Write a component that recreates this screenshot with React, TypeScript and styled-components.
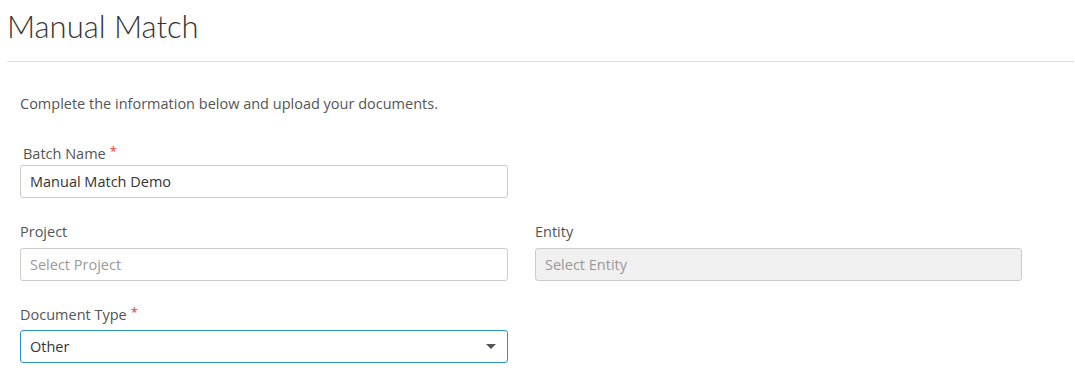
import React from 'react';
import styled, { createGlobalStyle } from 'styled-components';

const GlobalStyle = createGlobalStyle`
  body {
    margin: 0;
    background: #fff;
    font-family: 'Open Sans', 'Lato', sans-serif;
    color: #555;
  }
`;

const Page = styled.div`
  padding: 8px 1px 0 7px;
`;

const Title = styled.h1`
  margin: 0;
  font-family: 'Lato', sans-serif;
  font-size: 31px;
  font-weight: 300;
  line-height: 36px;
  color: #333;
`;

const Rule = styled.hr`
  margin: 17px 0 0;
  border: 0;
  border-top: 1px solid #ddd;
`;

const Form = styled.div`
  padding: 32px 0 0 13px;
`;

const Intro = styled.p`
  margin: 0 0 30px;
  font-size: 14.5px;
  line-height: 20px;
  color: #555;
`;

const Row = styled.div`
  display: grid;
  grid-template-columns: 488px 487px;
  column-gap: 27px;
  margin-bottom: 24px;
`;

const Field = styled.div`
  display: flex;
  flex-direction: column;
`;

const Label = styled.label<{ $indent?: boolean; $gap?: number }>`
  font-size: 14.5px;
  line-height: 20px;
  color: #555;
  padding-left: ${(p) => (p.$indent ? '3px' : '0')};
  margin-bottom: ${(p) => p.$gap ?? 6}px;
`;

const Required = styled.span`
  color: #e0393e;
  margin-left: 4px;
  font-size: 13px;
  line-height: 1;
  vertical-align: 3px;
`;

const Input = styled.div<{ $disabled?: boolean; $placeholder?: boolean; $focus?: boolean }>`
  box-sizing: border-box;
  height: 33px;
  display: flex;
  align-items: center;
  justify-content: space-between;
  padding: 0 11px 0 9px;
  border: 1px solid ${(p) => (p.$focus ? '#2a95c5' : '#ccc')};
  border-radius: 3px;
  background: ${(p) => (p.$disabled ? '#f0f0f0' : '#fff')};
  font-size: 14.5px;
  color: ${(p) => (p.$placeholder ? '#999' : '#333')};
`;

const Caret = () => (
  <svg width="10" height="6" viewBox="0 0 10 6">
    <path d="M0 0h10L5 5z" fill="#555" />
  </svg>
);

export default function App() {
  return (
    <>
      <GlobalStyle />
      <Page>
        <Title>Manual Match</Title>
        <Rule />
        <Form>
          <Intro>Complete the information below and upload your documents.</Intro>
          <Row>
            <Field>
              <Label $indent $gap={1}>
                Batch Name<Required>*</Required>
              </Label>
              <Input>Manual Match Demo</Input>
            </Field>
          </Row>
          <Row>
            <Field>
              <Label>Project</Label>
              <Input $placeholder>Select Project</Input>
            </Field>
            <Field>
              <Label>Entity</Label>
              <Input $placeholder $disabled>Select Entity</Input>
            </Field>
          </Row>
          <Row>
            <Field>
              <Label $gap={5}>
                Document Type<Required>*</Required>
              </Label>
              <Input $focus>
                Other
                <Caret />
              </Input>
            </Field>
          </Row>
        </Form>
      </Page>
    </>
  );
}
